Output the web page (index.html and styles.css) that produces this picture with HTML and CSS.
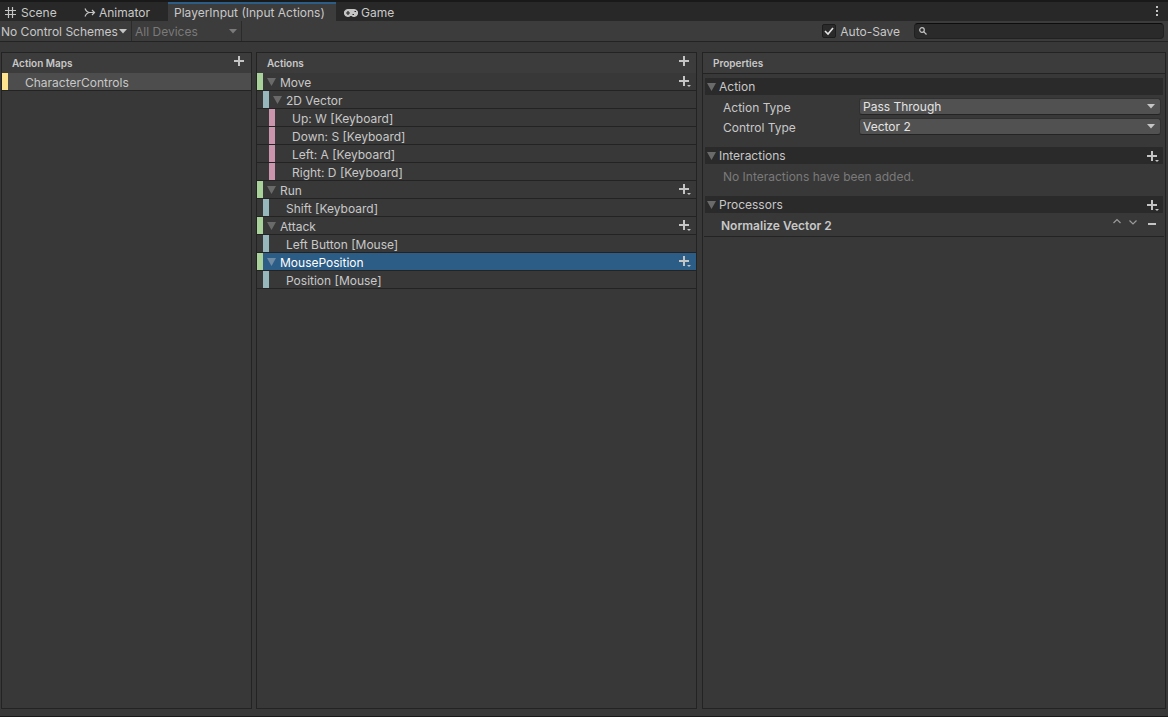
FILE: index.html
```
<!DOCTYPE html>
<html lang="en">

<head>
    <meta charset="UTF-8">
    <meta name="viewport" content="width=device-width, initial-scale=1.0">
    <title>PlayerInput (Input Actions)</title>
    <link rel="stylesheet" href="styles.css">
</head>

<body>
    <!-- Shared icons -->
    <svg class="sprite" aria-hidden="true">
        <symbol id="plus" viewBox="0 0 14 14">
            <path d="M6 2h2v4h4v2H8v4H6V8H2V6h4z" />
        </symbol>
        <symbol id="plus-more" viewBox="0 0 14 14">
            <path d="M5 2h2v4h4v2H7v4H5V8H1V6h4zM9 11h4l-2 2z" />
        </symbol>
        <symbol id="caret" viewBox="0 0 8 5">
            <path d="M0 0h8L4 4.500z" />
        </symbol>
        <symbol id="foldout" viewBox="0 0 9 8">
            <path d="M0 0h9L4.500 8z" />
        </symbol>
    </svg>

    <nav class="tabs">
        <button class="tab tab-scene">
            <svg class="tab-icon" viewBox="0 0 12 12"><path d="M3.500 0v11M7.500 0v11M0 3.500h11M0 7.500h11" class="stroke" /></svg>
            Scene
        </button>
        <button class="tab tab-animator">
            <svg class="tab-icon" viewBox="0 0 12 12"><path d="M1 1.500C2 4 3.500 5.500 6 5.500h4.500M1 9.500C2 7 3.500 5.500 6 5.500M8 3l2.500 2.500L8 8" class="stroke" /></svg>
            Animator
        </button>
        <button class="tab tab-input active">PlayerInput (Input Actions)</button>
        <button class="tab tab-game">
            <svg class="pad-icon" viewBox="0 0 14 8">
                <path d="M4 0h6a4 4 0 1 1-2.500 7h-1A4 4 0 1 1 4 0z" />
                <path d="M2 4h4M4 2v4M8.500 5.500h1.500M10.500 2.500H12" class="pad-marks" />
            </svg>
            Game
        </button>
        <button class="menu-button" aria-label="Window menu">
            <svg viewBox="0 0 3 11" width="3" height="11"><path d="M0 0h2v2H0zM0 4h2v2H0zM0 8h2v2H0z" /></svg>
        </button>
    </nav>

    <div class="toolbar">
        <div class="picker schemes">
            <select aria-label="Control scheme"><option>No Control Schemes</option></select>
            <svg class="caret"><use href="#caret" /></svg>
        </div>
        <div class="picker devices">
            <select aria-label="Devices" disabled><option>All Devices</option></select>
            <svg class="caret"><use href="#caret" /></svg>
        </div>
        <label class="auto-save"><input type="checkbox" checked><span>Auto-Save</span></label>
        <div class="search">
            <svg viewBox="0 0 8 8" width="8" height="8"><circle cx="3" cy="3" r="2.300" class="stroke" /><path d="M4.700 4.700 7.500 7.500" class="stroke" /></svg>
            <input type="text" aria-label="Search">
        </div>
    </div>

    <main class="panels">
        <section class="panel">
            <header class="panel-header">
                <h2>Action Maps</h2>
                <button class="add" aria-label="Add action map"><svg><use href="#plus" /></svg></button>
            </header>
            <ul class="tree">
                <li class="row map current"><button class="name">CharacterControls</button></li>
            </ul>
        </section>

        <section class="panel">
            <header class="panel-header">
                <h2>Actions</h2>
                <button class="add" aria-label="Add action"><svg><use href="#plus" /></svg></button>
            </header>
            <ul class="tree">
                <li class="row action">
                    <svg class="foldout"><use href="#foldout" /></svg><button class="name">Move</button>
                    <button class="add" aria-label="Add binding to Move"><svg><use href="#plus-more" /></svg></button>
                </li>
                <li class="row binding">
                    <svg class="foldout"><use href="#foldout" /></svg><button class="name">2D Vector</button>
                </li>
                <li class="row part"><button class="name">Up: W [Keyboard]</button></li>
                <li class="row part"><button class="name">Down: S [Keyboard]</button></li>
                <li class="row part"><button class="name">Left: A [Keyboard]</button></li>
                <li class="row part"><button class="name">Right: D [Keyboard]</button></li>
                <li class="row action">
                    <svg class="foldout"><use href="#foldout" /></svg><button class="name">Run</button>
                    <button class="add" aria-label="Add binding to Run"><svg><use href="#plus-more" /></svg></button>
                </li>
                <li class="row binding leaf"><button class="name">Shift [Keyboard]</button></li>
                <li class="row action">
                    <svg class="foldout"><use href="#foldout" /></svg><button class="name">Attack</button>
                    <button class="add" aria-label="Add binding to Attack"><svg><use href="#plus-more" /></svg></button>
                </li>
                <li class="row binding leaf"><button class="name">Left Button [Mouse]</button></li>
                <li class="row action selected">
                    <svg class="foldout"><use href="#foldout" /></svg><button class="name">MousePosition</button>
                    <button class="add" aria-label="Add binding to MousePosition"><svg><use href="#plus-more" /></svg></button>
                </li>
                <li class="row binding leaf"><button class="name">Position [Mouse]</button></li>
            </ul>
        </section>

        <section class="panel properties">
            <header class="panel-header">
                <h2>Properties</h2>
            </header>

            <h3 class="group"><svg class="foldout"><use href="#foldout" /></svg>Action</h3>
            <div class="fields">
                <div class="field">
                    <label for="action-type">Action Type</label>
                    <div class="dropdown">
                        <select id="action-type"><option>Pass Through</option><option>Button</option><option>Value</option></select>
                        <svg class="caret"><use href="#caret" /></svg>
                    </div>
                </div>
                <div class="field">
                    <label for="control-type">Control Type</label>
                    <div class="dropdown">
                        <select id="control-type"><option>Vector 2</option><option>Axis</option></select>
                        <svg class="caret"><use href="#caret" /></svg>
                    </div>
                </div>
            </div>

            <h3 class="group">
                <svg class="foldout"><use href="#foldout" /></svg>Interactions
                <button class="add" aria-label="Add interaction"><svg><use href="#plus-more" /></svg></button>
            </h3>
            <p class="empty">No Interactions have been added.</p>

            <h3 class="group">
                <svg class="foldout"><use href="#foldout" /></svg>Processors
                <button class="add" aria-label="Add processor"><svg><use href="#plus-more" /></svg></button>
            </h3>
            <div class="processor">
                <strong>Normalize Vector 2</strong>
                <button aria-label="Move up"><svg viewBox="0 0 8 8"><path d="M.5 5 4 1.500 7.500 5" class="stroke" /></svg></button>
                <button aria-label="Move down"><svg viewBox="0 0 8 8"><path d="M.5 2.500 4 6l3.500-3.500" class="stroke" /></svg></button>
                <button class="remove" aria-label="Remove"><svg viewBox="0 0 8 8"><path d="M0 4h8v2H0z" /></svg></button>
            </div>
        </section>
    </main>
</body>

</html>
```

FILE: styles.css
```
/* Base */

* {
    box-sizing: border-box;
}

body {
    display: flex;
    flex-direction: column;
    min-height: 100vh;
    margin: 0;
    background-color: #383838;
    border-top: 2px solid #191919;
    border-bottom: 1px solid #191919;
    color: #c8c8c8;
    font-family: Inter, "Liberation Sans", sans-serif;
    font-size: 12px;
    line-height: 16px;
}

button,
select,
input {
    margin: 0;
    padding: 0;
    border: none;
    background: none;
    color: inherit;
    font: inherit;
}

h2,
h3,
p,
ul {
    margin: 0;
    padding: 0;
}

svg {
    display: block;
    flex: none;
    fill: #c4c4c4;
}

.stroke {
    fill: none;
    stroke: #c4c4c4;
    stroke-width: 1.2;
}

.sprite {
    position: absolute;
    width: 0;
    height: 0;
}

.caret {
    width: 8px;
    height: 5px;
}

.foldout {
    width: 9px;
    height: 8px;
    margin-right: 4px;
    fill: #6a6a6a;
}

.add svg {
    width: 14px;
    height: 14px;
}

/* Window tabs */

.tabs {
    display: flex;
    height: 19px;
    background-color: #282828;
}

.tab {
    display: flex;
    align-items: center;
    gap: 4px;
    padding: 2px 14px 0 5px;
    white-space: nowrap;
}

.tab-scene {
    width: 79px;
}

.tab-animator {
    width: 89px;
    gap: 3px;
}

.tab-input {
    width: 168px;
    padding-left: 6px;
}

.tab-game {
    padding-left: 8px;
    gap: 3px;
}

.tab.active {
    padding-top: 0;
    background-color: #3c3c3c;
    border-top: 2px solid #2c5d87;
}

.tab-icon {
    width: 12px;
    height: 12px;
}

.pad-icon {
    width: 14px;
    height: 8px;
}

.pad-marks {
    stroke: #282828;
    stroke-width: 1.2;
}

.menu-button {
    margin-left: auto;
    padding: 0 9px;
}

/* Toolbar */

.toolbar {
    display: flex;
    align-items: center;
    height: 21px;
    padding-right: 4px;
    background-color: #3c3c3c;
    border-bottom: 1px solid #232323;
}

.picker {
    display: flex;
    align-items: center;
    height: 20px;
    border-right: 1px solid #2b2b2b;
}

.picker select,
.dropdown select {
    flex: 1;
    min-width: 0;
    padding-top: 2px;
    appearance: none;
}

.picker .caret,
.dropdown .caret {
    margin-left: -8px;
    pointer-events: none;
}

.schemes {
    width: 132px;
    padding: 0 4px 0 1px;
}

.devices {
    width: 110px;
    padding: 0 4px 0 3px;
    color: #7a7a7a;
}

.devices select {
    opacity: 1;
}

.devices .caret {
    fill: #7a7a7a;
}

.auto-save {
    display: flex;
    align-items: center;
    gap: 4px;
    margin-left: auto;
    margin-right: 14px;
}

.auto-save span {
    padding-top: 2px;
}

.auto-save input {
    width: 14px;
    height: 14px;
    appearance: none;
    background-color: #2a2a2a;
    border: 1px solid #1c1c1c;
    border-radius: 2px;
}

.auto-save input:checked {
    background-image: url("data:image/svg+xml,%3Csvg xmlns='http://www.w3.org/2000/svg' viewBox='0 0 12 12'%3E%3Cpath d='M2 6l3 3 5-6' fill='none' stroke='%23e4e4e4' stroke-width='1.600'/%3E%3C/svg%3E");
}

.search {
    display: flex;
    align-items: center;
    gap: 4px;
    width: 250px;
    height: 16px;
    padding: 0 4px;
    background-color: #2a2a2a;
    border: 1px solid #212121;
    border-top-color: #0d0d0d;
    border-radius: 4px;
}

.search input {
    flex: 1;
    min-width: 0;
    outline: none;
}

/* Panels */

.panels {
    flex: 1;
    display: grid;
    grid-template-columns: 251fr 441fr 465fr;
    gap: 4px;
    padding: 10px 2px 7px 1px;
}

.panel {
    min-width: 0;
    border: 1px solid #232323;
}

.panel-header {
    display: flex;
    align-items: center;
    justify-content: space-between;
    height: 20px;
    padding: 0 5px 0 10px;
    background-color: #3c3c3c;
}

.panel-header h2 {
    font-size: 10px;
    font-weight: 600;
}

.panel-header .add {
    padding-bottom: 4px;
}

/* Tree rows */

.tree {
    list-style: none;
}

.row {
    display: flex;
    align-items: center;
    height: 18px;
    padding-right: 4px;
    border-bottom: 1px solid #232323;
}

/* Colored marker in front of each row */
.row::before {
    content: "";
    align-self: stretch;
    flex: none;
    width: 6px;
    margin-right: 4px;
    background-color: #a8d29a;
}

.row .name {
    flex: 1;
    padding-top: 2px;
    text-align: left;
    white-space: nowrap;
}

.row .add {
    padding-bottom: 2px;
}

.map::before {
    margin-right: 17px;
    background-color: #ffe48f;
}

.binding {
    padding-left: 6px;
}

.binding::before {
    background-color: #96b8bd;
}

.leaf::before {
    margin-right: 17px;
}

.part {
    padding-left: 12px;
}

.part::before {
    margin-right: 17px;
    background-color: #cb95ad;
}

.current {
    background-color: #4d4d4d;
}

.selected {
    background-color: #2c5d87;
    color: #fff;
}

.selected .foldout {
    fill: #6f8aa3;
}

/* Properties */

.properties {
    margin-left: 1px;
}

.properties .panel-header {
    height: 21px;
    margin-bottom: 4px;
    border-bottom: 1px solid #232323;
}

.group {
    display: flex;
    align-items: center;
    height: 17px;
    margin: 0 2px;
    padding: 0 3px 0 2px;
    background-color: #2a2a2a;
    font-size: 12px;
    font-weight: 400;
}

.group .foldout {
    margin-right: 3px;
}

.group .add {
    margin-left: auto;
}

.fields {
    display: grid;
    gap: 3px;
    padding: 3px 4px 12px 20px;
}

.field {
    display: flex;
    align-items: center;
    height: 17px;
}

.field label {
    width: 136px;
    padding-top: 2px;
}

.dropdown {
    flex: 1;
    display: flex;
    align-items: center;
    height: 17px;
    padding: 0 5px 0 3px;
    background-color: #515151;
    border: 1px solid #303030;
    border-bottom-color: #242424;
    border-radius: 3px;
    color: #e4e4e4;
}

.dropdown select {
    padding-top: 1px;
}

.empty {
    padding: 5px 20px 11px;
    color: #7a7a7a;
}

.processor {
    display: flex;
    align-items: center;
    gap: 8px;
    height: 24px;
    margin: 0 1px;
    padding: 0 8px 0 17px;
    border-bottom: 1px solid #232323;
}

.processor strong {
    flex: 1;
    padding-top: 2px;
    font-weight: 600;
}

.processor svg {
    width: 8px;
    height: 8px;
}

.processor button {
    padding-bottom: 5px;
}

.processor .remove {
    margin-left: 3px;
    padding-bottom: 4px;
}

.processor .stroke {
    stroke: #9a9a9a;
}
```
